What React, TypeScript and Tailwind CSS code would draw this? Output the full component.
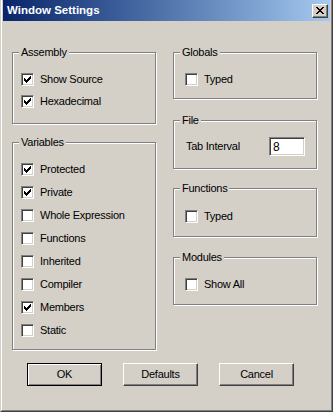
import React from "react";

const CheckMark = () => (
  <svg className="absolute left-[2px] top-[2px]" width="7" height="7" viewBox="0 0 7 7" shapeRendering="crispEdges">
    <path
      fill="#000"
      d="M6 0h1v1h-1z M5 1h2v1h-2z M0 2h1v1h-1z M4 2h3v1h-3z M0 3h2v1h-2z M3 3h3v1h-3z M0 4h5v1h-5z M1 5h3v1h-3z M2 6h1v1h-1z"
    />
  </svg>
);

const Checkbox = ({ checked, label }: { checked?: boolean; label: string }) => (
  <div className="flex items-center h-[13px] gap-[6px]">
    <span className="relative block w-[13px] h-[13px] shrink-0 bg-white border border-t-[#808080] border-l-[#808080] border-r-white border-b-white shadow-[inset_1px_1px_0_#404040,inset_-1px_-1px_0_#D4D0C8]">
      {checked && <CheckMark />}
    </span>
    <span className="leading-[13px] whitespace-nowrap">{label}</span>
  </div>
);

const Group = ({
  label,
  className,
  children,
}: {
  label: string;
  className: string;
  children?: React.ReactNode;
}) => (
  <div
    className={
      "relative w-[144px] border border-[#808080] shadow-[inset_1px_1px_0_#ffffff,1px_1px_0_#ffffff] " +
      className
    }
  >
    <span className="absolute left-[6px] top-[-7px] px-[2px] bg-[#D4D0C8] leading-[13px] whitespace-nowrap">
      {label}
    </span>
    {children}
  </div>
);

const Button = ({ label, isDefault }: { label: string; isDefault?: boolean }) =>
  isDefault ? (
    <div className="w-[75px] h-[23px] border border-black">
      <div className="w-full h-full flex items-center justify-center shadow-[inset_1px_1px_0_#ffffff,inset_-1px_-1px_0_#808080]">
        {label}
      </div>
    </div>
  ) : (
    <div className="w-[75px] h-[23px] flex items-center justify-center border border-t-white border-l-white border-r-[#404040] border-b-[#404040] shadow-[inset_-1px_-1px_0_#808080]">
      {label}
    </div>
  );

export default function App() {
  return (
    <div
      className="w-[333px] h-[412px] bg-[#D4D0C8] text-black text-[11px] tracking-[-0.25px] border-l border-l-[#D4D0C8] border-r border-b border-r-[#404040] border-b-[#404040] overflow-hidden"
      style={{ fontFamily: '"Liberation Sans", Arial, sans-serif' }}
    >
      <div className="h-full border-l border-l-white border-r border-b border-r-[#808080] border-b-[#808080] px-[1px] pb-[1px] flex flex-col">
        {/* Title bar */}
        <div className="h-[21px] shrink-0 flex items-center justify-between pl-[4px] pr-[2px] bg-gradient-to-r from-[#0A246A] to-[#A6CAF0]">
          <span className="text-white font-bold text-[11.5px] tracking-normal leading-none">Window Settings</span>
          <div className="w-[16px] h-[14px] flex items-center justify-center bg-[#D4D0C8] border border-t-white border-l-white border-r-[#404040] border-b-[#404040] shadow-[inset_-1px_-1px_0_#808080]">
            <svg width="8" height="7" viewBox="0 0 8 7" shapeRendering="crispEdges" className="ml-[-1px]">
              <path
                fill="#000"
                d="M0 0h2v1h-2z M6 0h2v1h-2z M1 1h2v1h-2z M5 1h2v1h-2z M2 2h4v1h-4z M3 3h2v1h-2z M2 4h4v1h-4z M1 5h2v1h-2z M5 5h2v1h-2z M0 6h2v1h-2z M6 6h2v1h-2z"
              />
            </svg>
          </div>
        </div>

        {/* Body */}
        <div className="flex flex-col pt-[31px] pl-[9px]">
          <div className="flex gap-[17px]">
            {/* Left column */}
            <div className="flex flex-col">
              <Group label="Assembly" className="h-[72px] pt-[20px] pl-[8px]">
                <div className="flex flex-col gap-[9px]">
                  <Checkbox checked label="Show Source" />
                  <Checkbox checked label="Hexadecimal" />
                </div>
              </Group>
              <Group label="Variables" className="mt-[18px] h-[208px] pt-[20px] pl-[8px]">
                <div className="flex flex-col gap-[10px]">
                  <Checkbox checked label="Protected" />
                  <Checkbox checked label="Private" />
                  <Checkbox label="Whole Expression" />
                  <Checkbox label="Functions" />
                  <Checkbox label="Inherited" />
                  <Checkbox label="Compiler" />
                  <Checkbox checked label="Members" />
                  <Checkbox label="Static" />
                </div>
              </Group>
            </div>

            {/* Right column */}
            <div className="flex flex-col">
              <Group label="Globals" className="h-[47px] pt-[20px] pl-[11px]">
                <Checkbox label="Typed" />
              </Group>
              <Group label="File" className="mt-[21px] h-[49px] pt-[16px] pl-[12px] pr-[11px]">
                <div className="flex items-center justify-between">
                  <span className="leading-[13px]">Tab Interval</span>
                  <div className="w-[36px] h-[19px] bg-white border border-t-[#808080] border-l-[#808080] border-r-white border-b-white shadow-[inset_1px_1px_0_#404040,inset_-1px_-1px_0_#D4D0C8] flex items-center pl-[3px] text-[12px]">
                    8
                  </div>
                </div>
              </Group>
              <Group label="Functions" className="mt-[19px] h-[49px] pt-[21px] pl-[11px]">
                <Checkbox label="Typed" />
              </Group>
              <Group label="Modules" className="mt-[20px] h-[48px] pt-[20px] pl-[11px]">
                <Checkbox label="Show All" />
              </Group>
            </div>
          </div>

          {/* Buttons */}
          <div className="flex gap-[21px] mt-[13px] pl-[15px]">
            <Button isDefault label="OK" />
            <Button label="Defaults" />
            <Button label="Cancel" />
          </div>
        </div>
      </div>
    </div>
  );
}
